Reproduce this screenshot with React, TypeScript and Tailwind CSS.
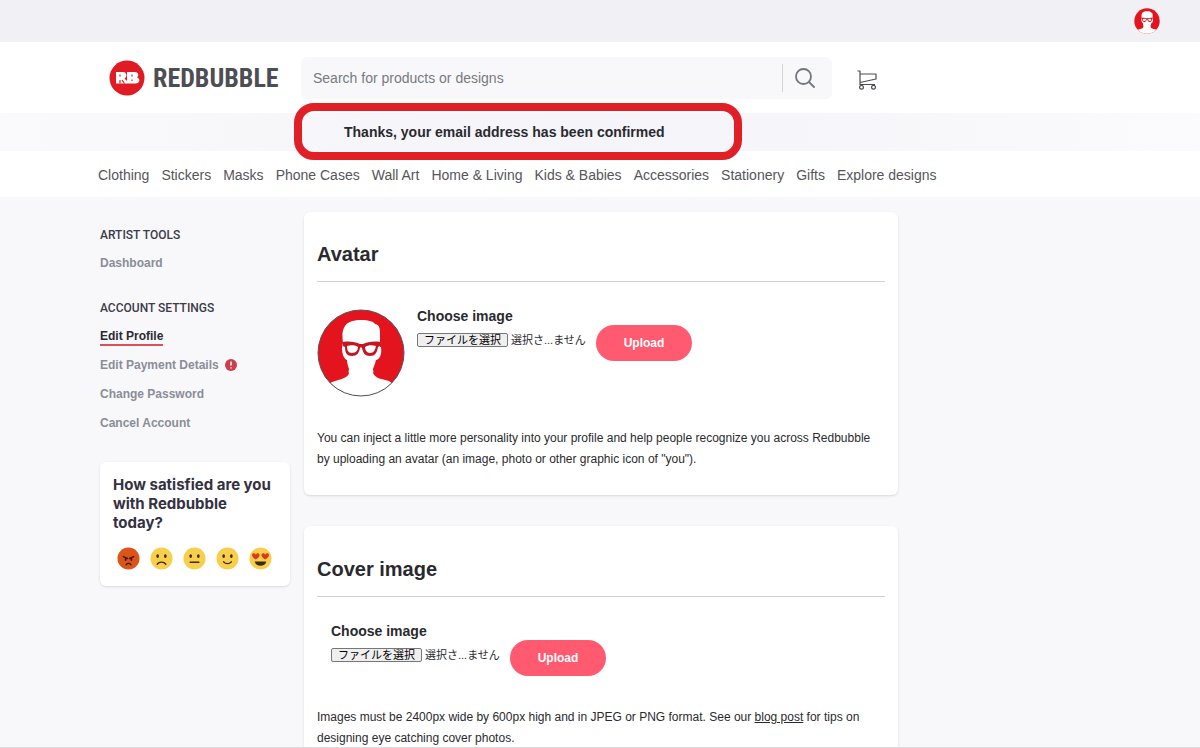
import React from 'react';

const categories = [
    'Clothing',
    'Stickers',
    'Masks',
    'Phone Cases',
    'Wall Art',
    'Home & Living',
    'Kids & Babies',
    'Accessories',
    'Stationery',
    'Gifts',
    'Explore designs',
];

const accountLinks = [
    { label: 'Edit Profile', active: true },
    { label: 'Edit Payment Details', alert: true },
    { label: 'Change Password' },
    { label: 'Cancel Account' },
];

function Avatar({ className, outlined = false }: { className: string; outlined?: boolean }) {
    return (
        <svg viewBox="0 0 88 88" className={className} role="img" aria-label="Avatar">
            <clipPath id={outlined ? 'avatar-lg' : 'avatar-sm'}>
                <circle cx="44" cy="44" r="43" />
            </clipPath>
            <g clipPath={outlined ? 'url(#avatar-lg)' : 'url(#avatar-sm)'}>
                <rect width="88" height="88" fill="#e3141e" />
                <path
                    d="M26 34C24 20 27 11 44 11c8 0 13 2 14 4 5 1 5 5 5 11v12h1c1 7-1 12-5 13-1 4-2 6-3 9 0 2 1 2 0 4 2 5 8 6 16 8l16 12v4H0v-4l15-11c9-3 16-4 17-9-1-2 0-2 0-4-1-3-2-6-2-9-3-1-5-6-5-12z"
                    fill="#fff"
                />
                <path
                    d="M26 33c6-1 13 0 17 2h3c4-2 11-3 17-2v4l-2 1c-1 6-3 9-8 9s-7-3-8-8c-.5-1-1.500-1-2 0-1 5-3 8-8 8s-7-3-7-9l-2-1zm4 4c0 4 1 7 5 7s6-3 6-6c-2-2-8-2-11-1zm18 1c0 3 2 6 5 6 4 0 5-3 6-7-4-1-8-1-11 1z"
                    fill="#c4161f"
                    fillRule="evenodd"
                />
            </g>
            {outlined && <circle cx="44" cy="44" r="43" fill="none" stroke="#555" strokeWidth="1" />}
        </svg>
    );
}

function Logo() {
    return (
        <a href="#" aria-label="Redbubble" className="flex shrink-0 items-center gap-2">
            <svg viewBox="0 0 36 36" className="h-9 w-9">
                <circle cx="18" cy="18" r="17.5" fill="#e01b24" />
                <path d="M7 12h7c4 0 4.500 5 1.500 6.500L18 21V12h8c4 0 4 4.500 2 5.500 3.500 1 3 6-1.500 6H7z" fill="#fff" />
                <path d="M11 20v3.500M11 14.500v2M13 20l2.500 3.500M23 14.500v2M23 19.500v1.500" stroke="#e01b24" strokeWidth="1.200" />
            </svg>
            <span className="font-['Liberation_Sans_Narrow','Roboto_Condensed','Roboto',sans-serif] text-[26px] leading-9 font-bold text-[#4d4e53]">REDBUBBLE</span>
        </a>
    );
}

function CartIcon() {
    return (
        <svg viewBox="0 0 20 20" className="h-5 w-5" fill="none" stroke="#4d4e53" strokeWidth="1.200" strokeLinejoin="round">
            <path d="M.5 1h2.500v13.500h15M3 4h16v5L3 12.500" />
            <circle cx="4.500" cy="17.300" r="1.900" />
            <circle cx="16.500" cy="17.300" r="1.900" />
        </svg>
    );
}

function Face({ mood }: { mood: string }) {
    const ink = '#3b2a1a';
    return (
        <svg viewBox="0 0 24 24" className="h-[23px] w-[23px]" fill="none" strokeLinecap="round">
            <circle cx="12" cy="12" r="11.500" fill={mood === 'Angry' ? '#dc5518' : '#f8cf4b'} />
            {mood === 'Angry' && (
                <g stroke="#4a1a10" strokeWidth="1.500">
                    <path d="M6.500 10l4.500 2M17.500 10L13 12M9.500 18.500c1.500-2 3.500-2 5 0" />
                    <path d="M9 12.500v1M15 12.500v1" strokeWidth="2" />
                </g>
            )}
            {(mood === 'Sad' || mood === 'Neutral' || mood === 'Happy') && (
                <g fill={ink}>
                    <ellipse cx="8" cy="9.500" rx="1.400" ry="2" />
                    <ellipse cx="16" cy="9.500" rx="1.400" ry="2" />
                </g>
            )}
            {mood === 'Sad' && <path d="M7.500 18c2-3 7-3 9 0" stroke={ink} strokeWidth="1.500" />}
            {mood === 'Neutral' && <path d="M7.500 16h9" stroke={ink} strokeWidth="1.600" />}
            {mood === 'Happy' && <path d="M8 15.500c2 2.500 6 2.500 8 0" stroke={ink} strokeWidth="1.500" />}
            {mood === 'Love' && (
                <>
                    <path d="M7 13C2 10 2.500 6.500 5 6.500c1.200 0 1.800 1 2 1.500.5-1 1.200-1.700 2.500-1.500C12 7 11.500 11 7 13zM17 13c-4.500-2-5-6-2.500-6.500 1.300-.2 2 .5 2.500 1.500.2-.5.8-1.500 2-1.500 2.500 0 3 3.500-2 6.500z" fill="#dc3820" />
                    <path d="M6 15h12c-1 6-11 6-12 0z" fill={ink} />
                </>
            )}
        </svg>
    );
}

function ImagePicker({ id }: { id: string }) {
    return (
        <div className="flex items-start gap-2">
            <div>
                <label htmlFor={id} className="block text-sm leading-5 font-bold">Choose image</label>
                <label className="mt-[7px] flex cursor-pointer items-center gap-[3px] font-['Liberation_Sans','Noto_Sans_CJK_JP',sans-serif] text-[11px] leading-3">
                    <input id={id} type="file" accept="image/png,image/jpeg" className="sr-only" />
                    <span className="flex h-[14px] w-[91px] items-center justify-center rounded-xs border border-[#767676] bg-[#efefef] whitespace-nowrap text-black">ファイルを選択</span>
                    <span className="w-[77px] whitespace-nowrap">選択さ...ません</span>
                </label>
            </div>
            <button type="button" className="mt-[19px] h-9 w-24 rounded-full bg-[#ff5a70] text-xs font-bold text-white hover:bg-[#f0485f]">Upload</button>
        </div>
    );
}

export default function App() {
    return (
        <div className="flex h-screen flex-col overflow-hidden border-b border-[#dcdce0] bg-[#f8f8fb] font-['Liberation_Sans',Arial,sans-serif] text-[#2a2a2e]">
            <div className="flex h-[42px] shrink-0 items-center justify-end bg-[#f1f0f5] pr-10">
                <button type="button" aria-label="Your account">
                    <Avatar className="h-[26px] w-[26px]" />
                </button>
            </div>

            <header className="flex h-[71px] shrink-0 items-center bg-white pl-[109px]">
                <div className="w-48 shrink-0">
                    <Logo />
                </div>
                <form role="search" className="flex h-[42px] w-[531px] items-center rounded-md bg-[#f8f8fa]">
                    <input
                        type="search"
                        aria-label="Search for products or designs"
                        placeholder="Search for products or designs"
                        className="h-full min-w-0 flex-1 bg-transparent px-3 text-sm outline-none placeholder:text-[#777a82]"
                    />
                    <button type="submit" aria-label="Search" className="flex h-7 w-[50px] items-center border-l border-[#d3d4d9] pl-3">
                        <svg viewBox="0 0 20 20" className="h-5 w-5" fill="none" stroke="#70757e" strokeWidth="1.800" strokeLinecap="round">
                            <circle cx="8.500" cy="8.500" r="7.500" />
                            <path d="M14 14l5 5" />
                        </svg>
                    </button>
                </form>
                <a href="#" aria-label="Cart" className="ml-[25px] pt-1">
                    <CartIcon />
                </a>
            </header>

            {/* Flash message, the ring hangs over the bars above and below */}
            <div className="relative h-[38px] shrink-0 bg-linear-to-r from-[#fafafc] via-[#f4f4f9] to-[#fbfbfd] pl-[344px]">
                <p role="status" className="text-sm leading-[38px] font-bold">Thanks, your email address has been confirmed</p>
                <div className="pointer-events-none absolute -top-[10px] left-[294px] z-10 h-[57px] w-[448px] rounded-[20px] border-8 border-[#e01f26]" />
            </div>

            <nav className="flex h-[46px] shrink-0 items-center gap-3 bg-white pt-[2px] pl-[98px] text-sm whitespace-nowrap text-[#55565b]">
                {categories.map((name) => (
                    <a key={name} href="#" className="hover:text-black">{name}</a>
                ))}
            </nav>

            <div className="flex min-h-0 flex-1 items-start overflow-hidden pt-[15px] pl-[100px]">
                <aside className="mr-[14px] w-[190px] shrink-0 text-xs font-bold text-[#8a8d98]">
                    <h3 className="mt-[13px] font-['Roboto',sans-serif] leading-5 font-medium text-[#3c3b48]">ARTIST TOOLS</h3>
                    <a href="#" className="mt-2 block leading-5">Dashboard</a>

                    <h3 className="mt-[25px] font-['Roboto',sans-serif] leading-5 font-medium text-[#3c3b48]">ACCOUNT SETTINGS</h3>
                    <ul className="mt-[3px]">
                        {accountLinks.map((item) => (
                            <li key={item.label} className="flex h-[29px] items-center gap-[6px]">
                                <a href="#" className={item.active ? 'border-b-2 border-[#d9505f] pt-[2px] leading-4 text-[#2a2a36]' : 'leading-5'}>
                                    {item.label}
                                </a>
                                {item.alert && (
                                    <svg viewBox="0 0 12 12" className="h-3 w-3" role="img" aria-label="Action needed">
                                        <circle cx="6" cy="6" r="6" fill="#cc3e4b" />
                                        <path d="M6 2.500v4M6 8.300v1.200" stroke="#fff" strokeWidth="1.500" />
                                    </svg>
                                )}
                            </li>
                        ))}
                    </ul>

                    <section className="mt-[25px] h-[124px] rounded-md bg-white pt-[13px] pl-[13px] shadow-sm">
                        <h4 className="font-['Inter',sans-serif] text-[15px] leading-[19px] font-bold text-[#343142]">
                            How satisfied are you<br />with Redbubble<br />today?
                        </h4>
                        <div className="mt-[15px] ml-1 flex gap-[10px]">
                            {['Angry', 'Sad', 'Neutral', 'Happy', 'Love'].map((mood) => (
                                <button key={mood} type="button" aria-label={mood}>
                                    <Face mood={mood} />
                                </button>
                            ))}
                        </div>
                    </section>
                </aside>

                <main className="max-w-[594px] flex-1">
                    <section className="h-[283px] rounded-md bg-white px-[13px] pt-7 shadow-sm">
                        <h2 className="border-b border-[#d2d2d6] pb-[13px] text-xl leading-7 font-bold">Avatar</h2>
                        <div className="mt-6 flex gap-3">
                            <Avatar className="mt-[3px] h-[88px] w-[88px] shrink-0" outlined />
                            <ImagePicker id="avatar-file" />
                        </div>
                        <p className="mt-[31px] text-xs leading-[21px]">
                            You can inject a little more personality into your profile and help people recognize you across Redbubble by uploading an avatar (an image, photo or other graphic icon of "you").
                        </p>
                    </section>

                    <section className="mt-[31px] rounded-md bg-white px-[13px] pt-7 pb-8 shadow-sm">
                        <h2 className="border-b border-[#d2d2d6] pt-px pb-[13px] text-xl leading-7 font-bold">Cover image</h2>
                        <div className="mt-6 pl-[14px]">
                            <ImagePicker id="cover-file" />
                        </div>
                        <p className="mt-[31px] text-xs leading-[21px]">
                            Images must be 2400px wide by 600px high and in JPEG or PNG format. See our <a href="#" className="underline">blog post</a> for tips on designing eye catching cover photos.
                        </p>
                    </section>
                </main>
            </div>
        </div>
    );
}
